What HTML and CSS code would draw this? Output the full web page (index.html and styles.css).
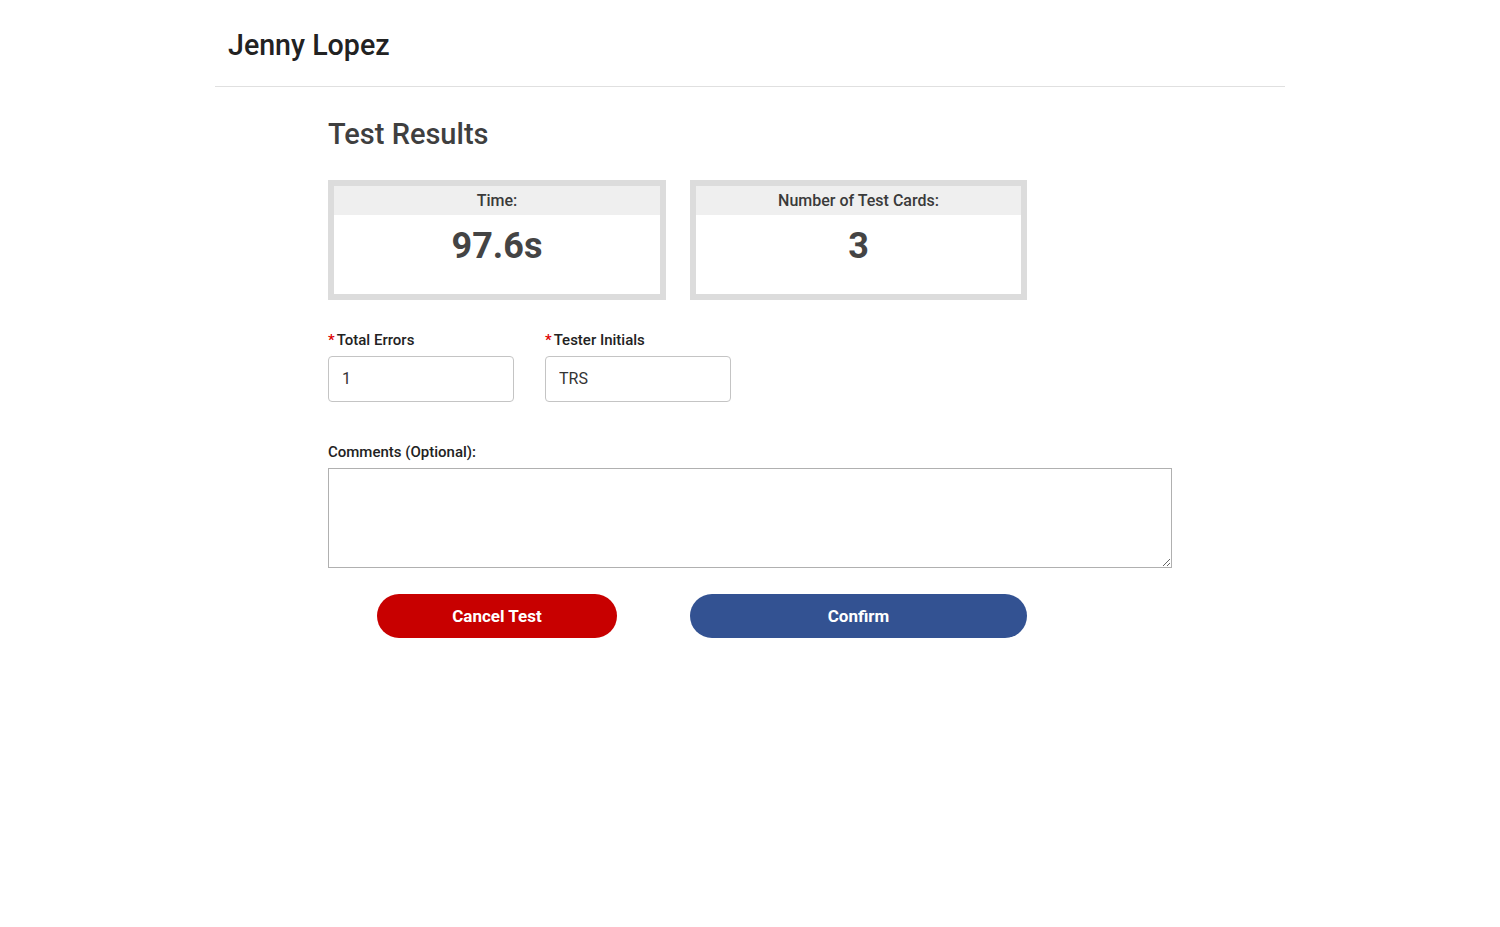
FILE: index.html
```html
<!DOCTYPE html>
<html lang="en">
<head>
<meta charset="utf-8">
<title>Test Results</title>
<link rel="stylesheet" href="styles.css">
</head>
<body>
<div class="page">
  <header class="header">
    <h1 class="name">Jenny Lopez</h1>
  </header>
  <main class="content">
    <h2 class="title">Test Results</h2>
    <div class="cards">
      <div class="card">
        <div class="card-head">Time:</div>
        <div class="card-value">97.6s</div>
      </div>
      <div class="card">
        <div class="card-head">Number of Test Cards:</div>
        <div class="card-value">3</div>
      </div>
    </div>
    <div class="fields">
      <div class="field">
        <label class="label"><span class="req">*</span>Total Errors</label>
        <input class="input" type="text" value="1">
      </div>
      <div class="field">
        <label class="label"><span class="req">*</span>Tester Initials</label>
        <input class="input" type="text" value="TRS">
      </div>
    </div>
    <div class="comments">
      <label class="label">Comments (Optional):</label>
      <textarea class="textarea"></textarea>
    </div>
    <div class="actions">
      <div class="action-col"><button class="btn btn-cancel">Cancel Test</button></div>
      <div class="action-col"><button class="btn btn-confirm">Confirm</button></div>
    </div>
  </main>
</div>
</body>
</html>
```

FILE: styles.css
```css
* { box-sizing: border-box; }
html, body { margin: 0; padding: 0; background: #fff; }
body { font-family: Roboto, "Liberation Sans", Arial, sans-serif; color: #222; }

.page { width: 1070px; margin: 0 auto; }

.header {
  height: 87px;
  border-bottom: 1px solid #e0e0e0;
  padding: 26px 0 0 13px;
}
.name {
  margin: 0;
  font-size: 28.6px;
  font-weight: 500;
  line-height: 38px;
  color: #222;
}

.content { padding: 29px 0 0 113px; }

.title {
  margin: 0;
  font-size: 29px;
  font-weight: 500;
  line-height: 36px;
  color: #3f3f3f;
}

.cards {
  display: flex;
  gap: 24px;
  margin-top: 28px;
}
.card {
  width: 338px;
  height: 120px;
  border: 6px solid #dcdcdc;
  background: #fff;
}
.card + .card { width: 337px; }
.card-head {
  height: 29px;
  background: #efefef;
  text-align: center;
  font-size: 16px;
  font-weight: 500;
  line-height: 29px;
  color: #3a3a3a;
}
.card-value {
  text-align: center;
  font-size: 36px;
  font-weight: 700;
  line-height: 62px;
  color: #444;
}

.fields {
  display: flex;
  gap: 31px;
  margin-top: 29px;
}
.field { display: flex; flex-direction: column; }
.label {
  font-size: 15px;
  font-weight: 500;
  line-height: 22px;
  color: #222;
  margin-bottom: 5px;
}
.req { color: #d00; margin-right: 2px; }
.input {
  width: 186px;
  height: 46px;
  border: 1px solid #c4c4c4;
  border-radius: 4px;
  padding: 0 13px 2px;
  font-family: Roboto, "Liberation Sans", Arial, sans-serif;
  font-size: 16px;
  color: #333;
  outline: none;
}

.comments {
  display: flex;
  flex-direction: column;
  margin-top: 39px;
}
.textarea {
  width: 844px;
  height: 100px;
  border: 1px solid #b0b0b0;
  border-radius: 0;
  margin: 0;
  font-family: Roboto, "Liberation Sans", Arial, sans-serif;
  font-size: 15px;
  display: block;
}

.actions {
  display: flex;
  gap: 24px;
  margin-top: 26px;
}
.action-col { width: 338px; display: flex; justify-content: center; }
.action-col + .action-col { width: 337px; }
.btn {
  height: 44px;
  border: none;
  border-radius: 22px;
  color: #fff;
  font-family: Roboto, "Liberation Sans", Arial, sans-serif;
  font-size: 17px;
  font-weight: 700;
  cursor: pointer;
}
.btn-cancel { width: 240px; background: #c80000; }
.btn-confirm { width: 337px; background: #335292; }
```
